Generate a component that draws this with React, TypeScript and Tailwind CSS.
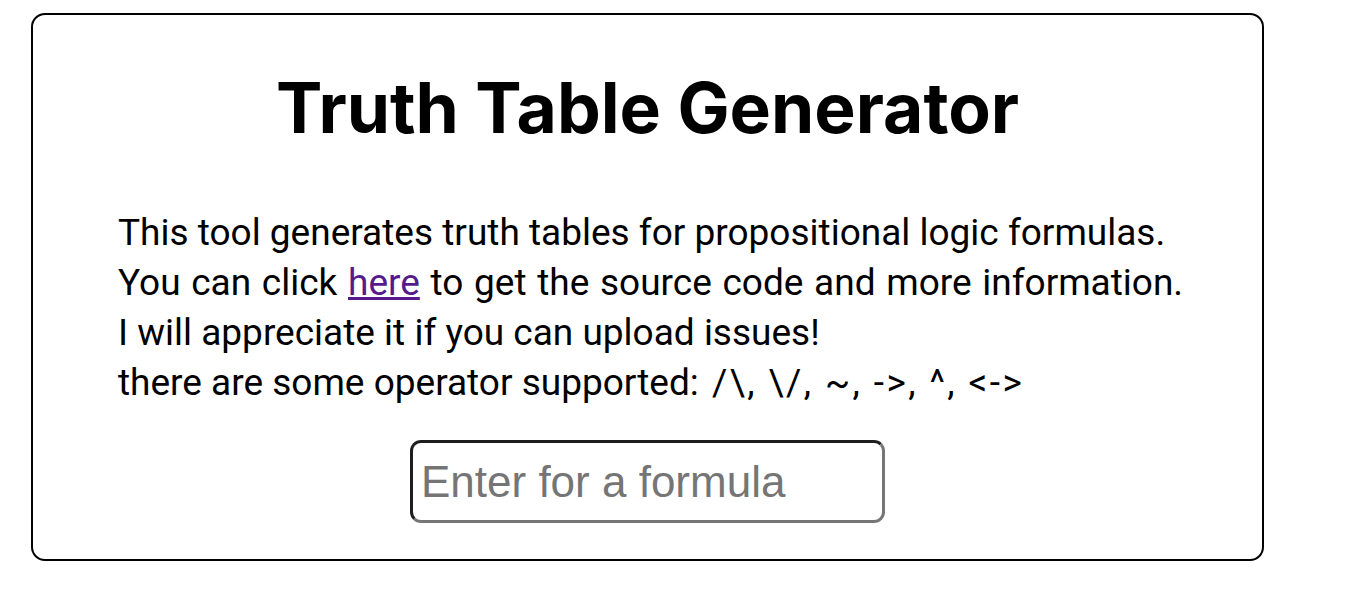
export default function App() {
  return (
    <div className="bg-white w-[1346px] h-[610px] pt-[13px] pl-[31px]">
      <div className="w-[1233px] h-[548px] border-2 border-black rounded-[14px] flex flex-col items-center">
        <h1
          className="mt-[53px] text-[69.5px] leading-[80px] font-bold text-black"
          style={{ fontFamily: 'Inter, "Noto Sans", sans-serif' }}
        >
          Truth Table Generator
        </h1>
        <div
          className="self-start ml-[85px] mt-[60px] text-[37px] leading-[50px] text-black"
          style={{ fontFamily: 'Roboto, "Noto Sans", sans-serif' }}
        >
          <p>This tool generates truth tables for propositional logic formulas.</p>
          <p className="[word-spacing:1.5px]">
            You can click{' '}
            <a href="#" className="text-[#551a8b] underline">
              here
            </a>{' '}
            to get the source code and more information.
          </p>
          <p>I will appreciate it if you can upload issues!</p>
          <p>
            there are some operator supported:{' '}
            <span className="ml-[4px] tracking-[2.4px]">/\, \/, ~, -&gt;, ^, &lt;-&gt;</span>
          </p>
        </div>
        <input
          type="text"
          placeholder="Enter for a formula"
          className="mt-[32px] w-[475px] h-[83px] px-[8px] rounded-[11px] border-[3px] border-t-[#1e1e1e] border-l-[#1e1e1e] border-r-[#767676] border-b-[#767676] text-[44px] placeholder:text-[#757575] outline-none"
          style={{ fontFamily: '"Liberation Sans", Arial, sans-serif' }}
        />
      </div>
    </div>
  );
}
